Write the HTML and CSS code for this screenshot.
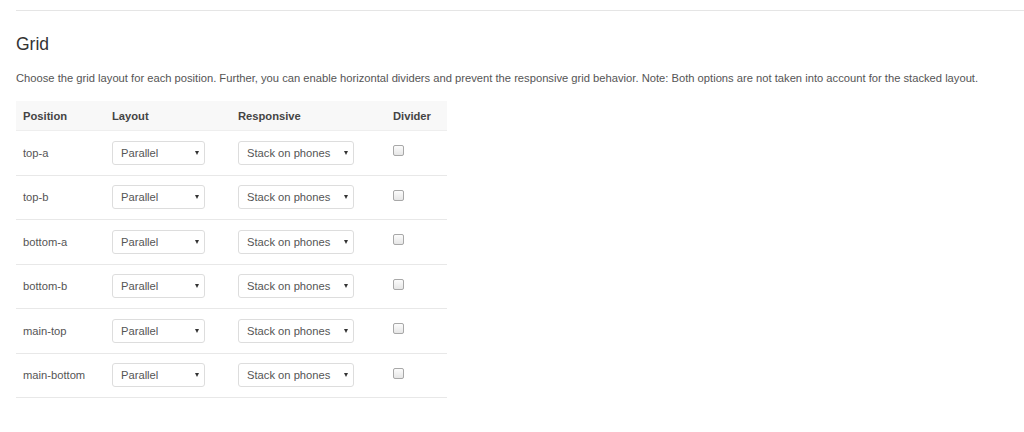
FILE: index.html
```html
<!DOCTYPE html>
<html lang="en">
<head>
    <meta charset="utf-8">
    <title>Grid</title>
    <link rel="stylesheet" href="styles.css">
</head>
<body>
    <div class="panel">
        <h2>Grid</h2>
        <p class="help">Choose the grid layout for each position. Further, you can enable horizontal dividers and prevent the responsive grid behavior. Note: Both options are not taken into account for the stacked layout.</p>

        <table class="grid-table">
            <thead>
                <tr>
                    <th class="col-pos">Position</th>
                    <th class="col-layout">Layout</th>
                    <th class="col-resp">Responsive</th>
                    <th class="col-div">Divider</th>
                </tr>
            </thead>
            <tbody id="rows"></tbody>
        </table>
    </div>

    <script>
        const positions = ['top-a', 'top-b', 'bottom-a', 'bottom-b', 'main-top', 'main-bottom'];
        const rows = document.getElementById('rows');

        positions.forEach(pos => {
            const tr = document.createElement('tr');
            tr.innerHTML = `
                <td>${pos}</td>
                <td><span class="select layout"><select><option>Parallel</option><option>Stacked</option></select></span></td>
                <td><span class="select resp"><select><option>Stack on phones</option><option>Stack on tablets</option></select></span></td>
                <td><input type="checkbox" class="check"></td>`;
            rows.appendChild(tr);
        });
    </script>
</body>
</html>
```

FILE: styles.css
```css
body {
    margin: 0;
    font-family: "Liberation Sans", Arial, sans-serif;
    font-size: 11.2px;
    color: #555;
    background: #fff;
}

.panel {
    margin: 10px 0 0 16px;
    padding-top: 22px;
    border-top: 1px solid #e5e5e5;
}

h2 {
    margin: 0;
    font-size: 17.5px;
    font-weight: normal;
    color: #333;
    line-height: 22px;
}

.help {
    margin: 14px 0 14px;
    line-height: 18px;
}

.grid-table {
    border-collapse: collapse;
    width: 431px;
}

.grid-table th {
    background: #f8f8f8;
    text-align: left;
    font-weight: bold;
    color: #444;
    height: 29px;
    padding: 0 7px;
    border-bottom: 1px solid #eee;
}

.grid-table td {
    height: 43.5px;
    padding: 0 7px;
    border-bottom: 1px solid #e8e8e8;
}

.col-pos { width: 75px; }
.col-layout { width: 112px; }
.col-resp { width: 141px; }

.select {
    position: relative;
    display: inline-block;
    vertical-align: middle;
}

.select select {
    appearance: none;
    -webkit-appearance: none;
    font-family: inherit;
    font-size: 11.2px;
    color: #555;
    height: 24px;
    padding: 0 0 0 8px;
    border: 1px solid #ddd;
    border-radius: 3px;
    background: #fff;
}

.select.layout select { width: 93px; }
.select.resp select { width: 116px; }

.select::after {
    content: "";
    position: absolute;
    right: 6px;
    top: 10px;
    border-left: 2.5px solid transparent;
    border-right: 2.5px solid transparent;
    border-top: 4px solid #333;
    pointer-events: none;
}

.check {
    appearance: none;
    -webkit-appearance: none;
    width: 11px;
    height: 11px;
    margin: 0 0 4px 0;
    border: 1px solid #a8a8a8;
    border-radius: 2px;
    background: linear-gradient(#fcfcfc, #e6e6e6);
    vertical-align: middle;
}
```
